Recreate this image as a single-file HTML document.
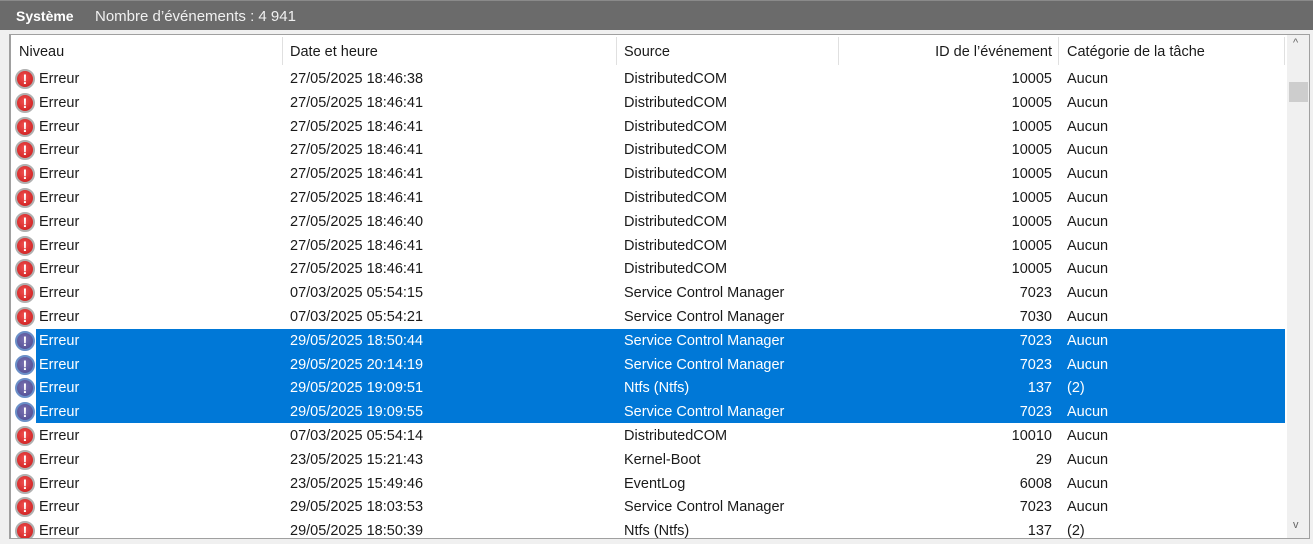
<!DOCTYPE html>
<html><head><meta charset="utf-8"><style>
body{margin:0;width:1313px;height:544px;overflow:hidden;background:#f0f0f0;font-family:"Liberation Sans",sans-serif;position:relative}
.top{position:absolute;left:0;top:0;width:1313px;height:30px;background:#6b6b6b;border-top:1px solid #8a8a8a;box-sizing:border-box}
.top b{position:absolute;left:16px;top:7px;color:#fff;font-size:14px}
.top span{position:absolute;left:95px;top:7px;color:#f0f0f0;font-size:15px}
.frame{position:absolute;left:9px;top:34px;width:1301px;height:505px;border:1px solid #a0a0a0;border-left:2px solid #a0a0a0;background:#fff;box-sizing:border-box;overflow:hidden}
.t{position:absolute;font-size:14.5px;color:#1a1a1a;white-space:nowrap}
.hdr{position:absolute;left:0;top:0;height:31px;width:1276px}
.sep{position:absolute;top:2px;width:1px;height:28px;background:#e0e0e0}
.row{position:absolute;left:0;width:1276px;height:24px}
.sel{position:absolute;left:25px;width:1249px;background:#0078d7}
.ic{position:absolute;left:4px;width:20px;height:20px;border-radius:50%;box-sizing:border-box;border:2px solid #b0b0b0;background:radial-gradient(circle at 45% 40%,#f05050,#c81818);color:#fff;font-weight:bold;font-size:14px;text-align:center;line-height:16px}
.ic.b{background:radial-gradient(circle at 45% 40%,#7a70b0,#4a4a90);border-color:#6a8fc8}
.sb{position:absolute;left:1276px;top:0;width:22px;height:505px;background:#f0f0f0}
</style></head><body>
<div class="top"><b>Système</b><span>Nombre d’événements : 4 941</span></div>
<div class="frame">
<div class="hdr">
<div class="t" style="left:8px;top:9px">Niveau</div>
<div class="t" style="left:132px;top:-5px;font-size:10px;color:#999">^</div>
<div class="sep" style="left:271px"></div>
<div class="t" style="left:279px;top:9px">Date et heure</div>
<div class="sep" style="left:605px"></div>
<div class="t" style="left:613px;top:9px">Source</div>
<div class="sep" style="left:827px"></div>
<div class="t" style="right:235px;top:9px">ID de l’événement</div>
<div class="sep" style="left:1047px"></div>
<div class="t" style="left:1056px;top:9px">Catégorie de la tâche</div>
<div class="sep" style="left:1273px"></div>
</div>
<div class="sel" style="top:294px;height:94px"></div>
<div id="rows"></div>
<div class="sb"><div style="position:absolute;left:2px;top:47px;width:19px;height:20px;background:#cdcdcd"></div>
<div style="position:absolute;left:6px;top:2px;font-size:11px;color:#666">^</div>
<div style="position:absolute;left:6px;top:484px;font-size:11px;color:#666">v</div></div>
</div>
<script>
var d=[["27/05/2025 18:46:38","DistributedCOM","10005","Aucun"],["27/05/2025 18:46:41","DistributedCOM","10005","Aucun"],["27/05/2025 18:46:41","DistributedCOM","10005","Aucun"],["27/05/2025 18:46:41","DistributedCOM","10005","Aucun"],["27/05/2025 18:46:41","DistributedCOM","10005","Aucun"],["27/05/2025 18:46:41","DistributedCOM","10005","Aucun"],["27/05/2025 18:46:40","DistributedCOM","10005","Aucun"],["27/05/2025 18:46:41","DistributedCOM","10005","Aucun"],["27/05/2025 18:46:41","DistributedCOM","10005","Aucun"],["07/03/2025 05:54:15","Service Control Manager","7023","Aucun"],["07/03/2025 05:54:21","Service Control Manager","7030","Aucun"],["29/05/2025 18:50:44","Service Control Manager","7023","Aucun",1],["29/05/2025 20:14:19","Service Control Manager","7023","Aucun",1],["29/05/2025 19:09:51","Ntfs (Ntfs)","137","(2)",1],["29/05/2025 19:09:55","Service Control Manager","7023","Aucun",1],["07/03/2025 05:54:14","DistributedCOM","10010","Aucun"],["23/05/2025 15:21:43","Kernel-Boot","29","Aucun"],["23/05/2025 15:49:46","EventLog","6008","Aucun"],["29/05/2025 18:03:53","Service Control Manager","7023","Aucun"],["29/05/2025 18:50:39","Ntfs (Ntfs)","137","(2)"]];
var h="";
d.forEach(function(r,i){var y=32+i*23.8;var c=r[4]?"color:#fff;":"";
h+='<div class="row" style="top:'+y+'px"><div class="ic'+(r[4]?' b':'')+'" style="top:2px">!</div>'+
'<div class="t" style="'+c+'left:28px;top:4px">Erreur</div>'+
'<div class="t" style="'+c+'left:279px;top:4px">'+r[0]+'</div>'+
'<div class="t" style="'+c+'left:613px;top:4px">'+r[1]+'</div>'+
'<div class="t" style="'+c+'right:235px;top:4px">'+r[2]+'</div>'+
'<div class="t" style="'+c+'left:1056px;top:4px">'+r[3]+'</div></div>';});
document.getElementById("rows").innerHTML=h;
</script>
</body></html>
